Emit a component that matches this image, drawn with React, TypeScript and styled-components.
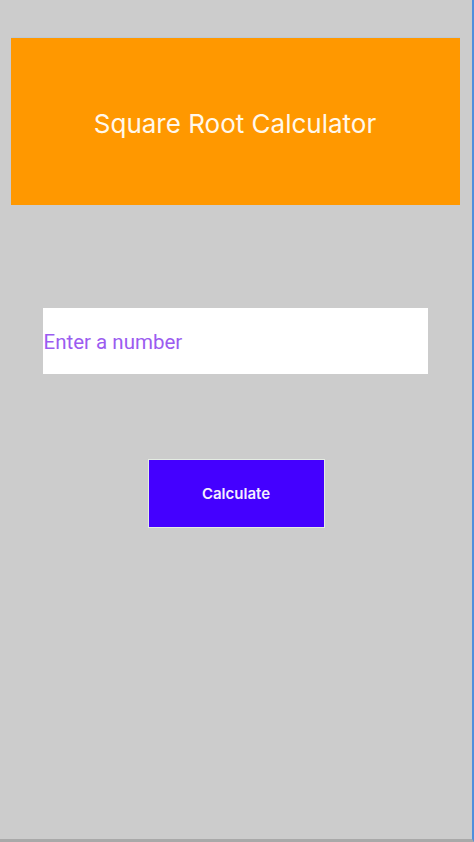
import { useState } from 'react';
import styled, { createGlobalStyle } from 'styled-components';

const GlobalStyle = createGlobalStyle`
  html, body {
    margin: 0;
    padding: 0;
    background: #cccccc;
  }
  * {
    box-sizing: border-box;
  }
`;

const Screen = styled.div`
  display: flex;
  flex-direction: column;
  align-items: center;
  width: 474px;
  height: 842px;
  padding-top: 38px;
  padding-right: 2px;
  background: #cccccc;
  border-right: 2px solid #4f8fdc;
  border-bottom: 3px solid #a9a9a9;
  font-family: Roboto, 'Noto Sans', sans-serif;
`;

const Header = styled.header`
  display: flex;
  align-items: center;
  justify-content: center;
  width: 449px;
  height: 167px;
  background: #ff9800;
  box-shadow: 0 -1px 0 #b9c8d8;
`;

const Title = styled.h1`
  margin: 3px 0 0;
  color: #fff8ec;
  font-family: Inter, Roboto, sans-serif;
  font-size: 26px;
  font-weight: 400;
`;

const NumberInput = styled.input`
  margin-top: 103px;
  width: 385px;
  height: 66px;
  padding: 1px 0 0 1px;
  border: none;
  outline: none;
  background: #ffffff;
  font-family: Roboto, 'Noto Sans', sans-serif;
  font-size: 20.5px;
  color: #333;

  &::placeholder {
    color: #9b5cf0;
  }
`;

const CalcButton = styled.button`
  margin-top: 85px;
  margin-left: 2px;
  width: 177px;
  height: 69px;
  border: 1px solid #e4ece2;
  background: #4400ff;
  color: #f4eefe;
  font-family: Inter, Roboto, sans-serif;
  font-size: 15px;
  font-weight: 600;
  cursor: pointer;
`;

const Result = styled.p`
  margin: 24px 0 0;
  color: #333;
  font-size: 18px;
`;

export default function App() {
  const [value, setValue] = useState('');
  const [result, setResult] = useState<string | null>(null);

  const calculate = () => {
    const n = parseFloat(value);
    if (isNaN(n) || n < 0) {
      setResult('Please enter a valid number');
    } else {
      setResult(`√${n} = ${Math.sqrt(n)}`);
    }
  };

  return (
    <>
      <GlobalStyle />
      <Screen>
        <Header>
          <Title>Square Root Calculator</Title>
        </Header>
        <NumberInput
          type="text"
          placeholder="Enter a number"
          value={value}
          onChange={(e) => setValue(e.target.value)}
        />
        <CalcButton onClick={calculate}>Calculate</CalcButton>
        {result && <Result>{result}</Result>}
      </Screen>
    </>
  );
}
